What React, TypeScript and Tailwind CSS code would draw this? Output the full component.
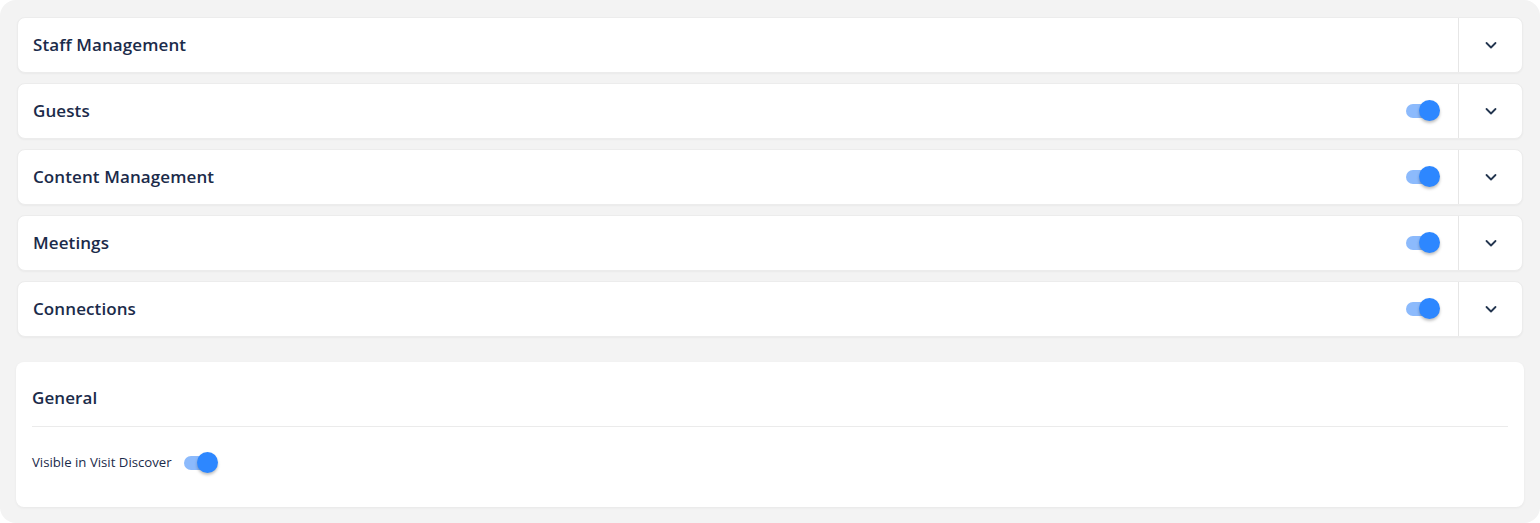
import React from 'react';

const sections = [
  { name: 'Staff Management', toggle: false },
  { name: 'Guests', toggle: true },
  { name: 'Content Management', toggle: true },
  { name: 'Meetings', toggle: true },
  { name: 'Connections', toggle: true },
];

function Toggle() {
  return (
    <div className="relative w-[34px] h-[22px] flex items-center">
      <div className="w-[30px] h-[14px] rounded-full bg-[#8cbafc]" />
      <div className="absolute right-0 top-0 w-[21px] h-[21px] rounded-full bg-[#2d87ff] shadow-[0_2px_3px_rgba(0,0,0,0.25)]" />
    </div>
  );
}

function Chevron() {
  return (
    <svg width="14" height="14" viewBox="0 0 14 14" fill="none">
      <path d="M2.5 5 L7 9.5 L11.5 5" stroke="#243650" strokeWidth="1.8" strokeLinecap="round" strokeLinejoin="round" />
    </svg>
  );
}

export default function App() {
  return (
    <div className="bg-white" style={{ fontFamily: '"Open Sans", Lato, sans-serif' }}>
      <div className="bg-[#f3f3f3] rounded-2xl px-4 pt-[17px] pb-4 min-h-[523px] text-[#1b2b4a]">
        <div className="flex flex-col gap-[10px]">
          {sections.map((s) => (
            <div
              key={s.name}
              className="mx-px h-[56px] flex items-stretch bg-white rounded-lg border border-[#ececec] shadow-[0_1px_2px_rgba(0,0,0,0.04)]"
            >
              <div className="flex-1 flex items-center justify-between pl-[15px] pr-[18px]">
                <span className="text-[17px] font-semibold tracking-[0.1px]">{s.name}</span>
                {s.toggle && <Toggle />}
              </div>
              <div className="w-[64px] border-l border-[#e6e6e6] flex items-center justify-center">
                <Chevron />
              </div>
            </div>
          ))}
        </div>
        <div className="mt-[25px] bg-white rounded-lg px-4 pt-6 pb-8 shadow-[0_1px_3px_rgba(0,0,0,0.05)]">
          <div className="text-[17px] font-semibold tracking-[0.1px] leading-6 pb-4 border-b border-[#ebebeb]">General</div>
          <div className="mt-6 h-6 flex items-center gap-3">
            <span className="text-[13.2px]">Visible in Visit Discover</span>
            <Toggle />
          </div>
        </div>
      </div>
    </div>
  );
}
